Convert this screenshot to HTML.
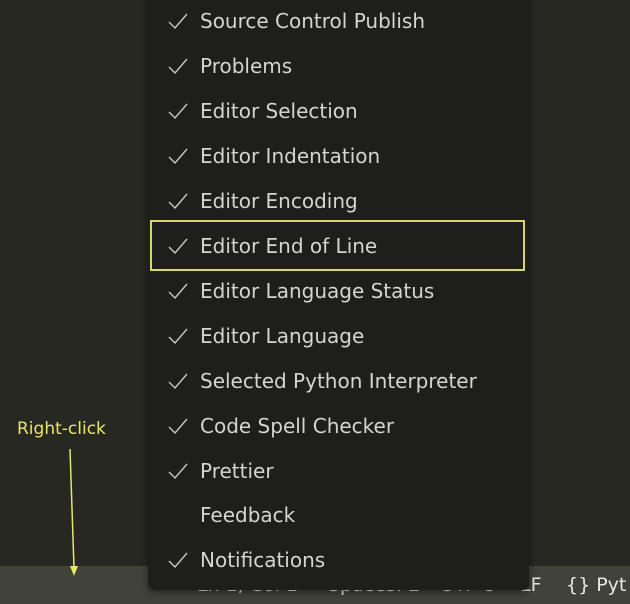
<!DOCTYPE html>
<html><head><style>
html,body{margin:0;padding:0}
body{width:630px;height:604px;background:#272822;position:relative;overflow:hidden;font-family:"DejaVu Sans","Liberation Sans",sans-serif}
.status{position:absolute;left:0;top:566px;width:630px;height:38px;background:#414339}
.st{position:absolute;top:574px;color:#e8e8e0;font-size:19px;white-space:nowrap}
.menu{position:absolute;left:148px;top:-10px;width:381px;height:600px;background:#1e1e1c;border-radius:6px;box-shadow:0 2px 8px rgba(0,0,0,.5)}
.item{position:absolute;left:200px;color:#d4d4d0;font-size:20px;white-space:nowrap;line-height:24px}
.ck{position:absolute;left:168px;width:20px;height:16px}
.hl{position:absolute;left:150px;top:220px;width:371px;height:47px;border:2px solid #d8d86a}
.rc{position:absolute;left:17px;top:419px;color:#e6e66a;font-size:17px}
</style></head><body>
<div class="status"></div>
<div class="st" style="left:197px">Ln 1, Col 1</div>
<div class="st" style="left:328px">Spaces: 2</div>
<div class="st" style="left:440px">UTF-8</div>
<div class="st" style="left:520px">LF</div>
<div class="st" style="left:566px">{} Pyt</div>
<div class="rc">Right-click</div>
<svg style="position:absolute;left:0;top:0" width="630" height="604"><line x1="70" y1="449" x2="74" y2="568" stroke="#e6e66a" stroke-width="1.5"/><path d="M70 566 L74 576 L78 566 Z" fill="#e6e66a"/></svg>
<div class="menu"></div>
<div class="hl"></div>
<svg style="position:absolute;left:0;top:0" width="630" height="604" fill="none" stroke="#c8c8c4" stroke-width="1.4">
<g id="c"><polyline points="169,22 175,28 187,14"/></g>
<use href="#c" y="45"/><use href="#c" y="90"/><use href="#c" y="135"/><use href="#c" y="180"/><use href="#c" y="225"/><use href="#c" y="270"/><use href="#c" y="315"/><use href="#c" y="360"/><use href="#c" y="405"/><use href="#c" y="450"/><use href="#c" y="539"/>
</svg>
<div class="item" style="top:9px">Source Control Publish</div>
<div class="item" style="top:54px">Problems</div>
<div class="item" style="top:99px">Editor Selection</div>
<div class="item" style="top:144px">Editor Indentation</div>
<div class="item" style="top:189px">Editor Encoding</div>
<div class="item" style="top:234px">Editor End of Line</div>
<div class="item" style="top:279px">Editor Language Status</div>
<div class="item" style="top:324px">Editor Language</div>
<div class="item" style="top:369px">Selected Python Interpreter</div>
<div class="item" style="top:414px">Code Spell Checker</div>
<div class="item" style="top:459px">Prettier</div>
<div class="item" style="top:503px">Feedback</div>
<div class="item" style="top:548px">Notifications</div>
</body></html>
